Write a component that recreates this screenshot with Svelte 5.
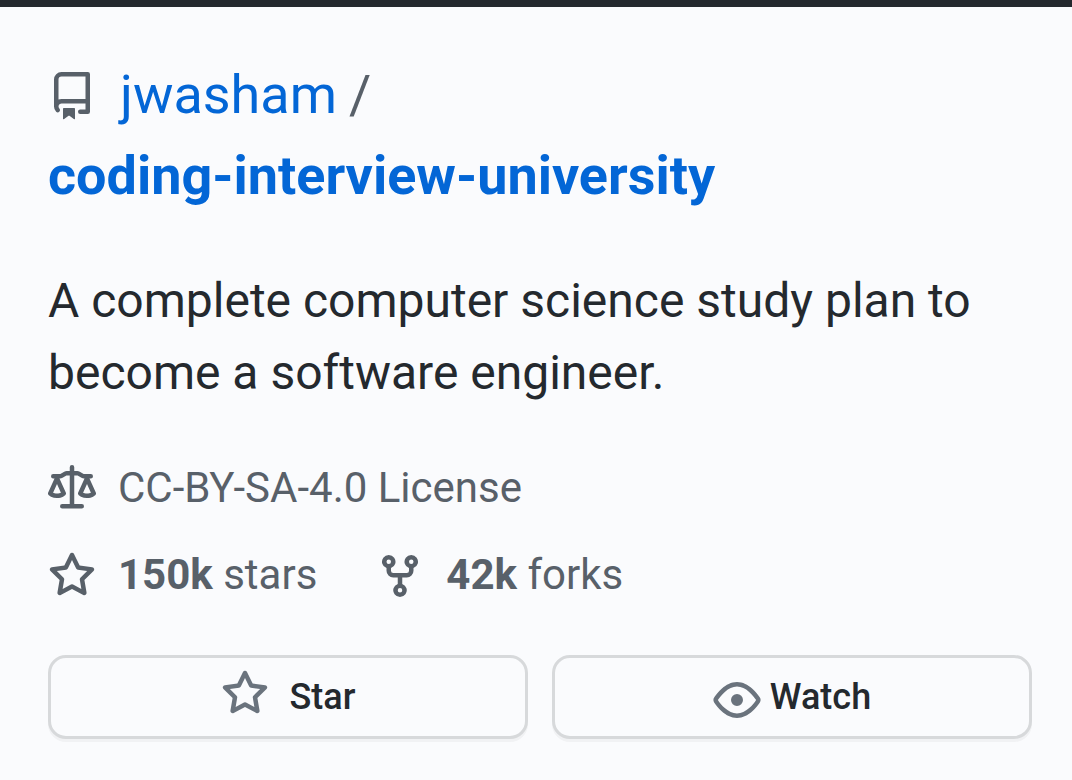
<script>
  const star = 'M8 .25a.75.75 0 01.673.418l1.882 3.815 4.21.612a.75.75 0 01.416 1.279l-3.046 2.97.719 4.192a.75.75 0 01-1.088.791L8 12.347l-3.766 1.98a.75.75 0 01-1.088-.79l.72-4.194L.818 6.374a.75.75 0 01.416-1.28l4.21-.611L7.327.668A.75.75 0 018 .25zm0 2.445L6.615 5.5a.75.75 0 01-.564.41l-3.097.45 2.24 2.184a.75.75 0 01.216.664l-.528 3.084 2.769-1.456a.75.75 0 01.698 0l2.77 1.456-.53-3.084a.75.75 0 01.216-.664l2.24-2.183-3.096-.45a.75.75 0 01-.564-.41L8 2.694z';
  const law = 'M8.75.75a.75.75 0 00-1.5 0V2h-.984c-.305 0-.604.08-.869.23l-1.288.737A.25.25 0 013.984 3H1.75a.75.75 0 000 1.5h.428L.066 9.192a.75.75 0 00.154.838l.53-.53-.53.53v.001l.002.002.002.002.006.006.016.015.045.04a3.514 3.514 0 00.686.45A4.492 4.492 0 003 11c.88 0 1.556-.22 2.023-.454a3.515 3.515 0 00.686-.45l.045-.04.016-.015.006-.006.002-.002.001-.002L5.25 9.5l.53.53a.75.75 0 00.154-.838L3.822 4.5h.162c.305 0 .604-.08.869-.23l1.289-.737a.25.25 0 01.124-.033h.984V13h-2.5a.75.75 0 000 1.5h6.5a.75.75 0 000-1.5h-2.5V3.5h.984a.25.25 0 01.124.033l1.29.736c.264.152.563.231.868.231h.162l-2.112 4.692a.75.75 0 00.154.838l.53-.53-.53.53v.001l.002.002.002.002.006.006.016.015.045.04a3.517 3.517 0 00.686.45A4.492 4.492 0 0013 11c.88 0 1.556-.22 2.023-.454a3.512 3.512 0 00.686-.45l.045-.04.01-.01.006-.005.006-.006.002-.002.001-.002-.529-.531.53.53a.75.75 0 00.154-.838L13.823 4.5h.427a.75.75 0 000-1.5h-2.234a.25.25 0 01-.124-.033l-1.29-.736A1.75 1.75 0 009.735 2H8.75V.75zM1.695 9.227c.285.135.718.273 1.305.273s1.02-.138 1.305-.273L3 6.327l-1.305 2.9zm10 0c.285.135.718.273 1.305.273s1.02-.138 1.305-.273L13 6.327l-1.305 2.9z';
  const repo = 'M2 2.5A2.5 2.5 0 014.5 0h8.75a.75.75 0 01.75.75v12.5a.75.75 0 01-.75.75h-2.5a.75.75 0 110-1.5h1.75v-2h-8a1 1 0 00-.714 1.7.75.75 0 01-1.072 1.05A2.495 2.495 0 012 11.5v-9zm10.5-1V9h-8c-.356 0-.694.074-1 .208V2.5a1 1 0 011-1h8zM5 12.25v3.25a.25.25 0 00.4.2l1.45-1.087a.25.25 0 01.3 0L8.6 15.7a.25.25 0 00.4-.2v-3.25a.25.25 0 00-.25-.25h-3.5a.25.25 0 00-.25.25z';
  const fork = 'M5 3.25a.75.75 0 11-1.5 0 .75.75 0 011.5 0zm0 2.122a2.25 2.25 0 10-1.5 0v.878A2.25 2.25 0 005.75 8.5h1.5v2.128a2.251 2.251 0 101.5 0V8.5h1.5a2.25 2.25 0 002.25-2.25v-.878a2.25 2.25 0 10-1.5 0v.878a.75.75 0 01-.75.75h-4.5A.75.75 0 015 6.25v-.878zm3.75 7.378a.75.75 0 11-1.5 0 .75.75 0 011.5 0zm3-8.75a.75.75 0 100-1.5.75.75 0 000 1.5z';
  const eye = 'M1.679 7.932c.412-.621 1.242-1.75 2.366-2.717C5.175 4.242 6.527 3.5 8 3.5c1.473 0 2.824.742 3.955 1.715 1.124.967 1.954 2.096 2.366 2.717a.119.119 0 010 .136c-.412.621-1.242 1.75-2.366 2.717C10.825 11.758 9.473 12.5 8 12.5c-1.473 0-2.824-.742-3.955-1.715C2.92 9.818 2.09 8.69 1.679 8.068a.119.119 0 010-.136zM8 2c-1.981 0-3.67.992-4.933 2.078C1.797 5.169.88 6.423.43 7.1a1.619 1.619 0 000 1.798c.45.678 1.367 1.932 2.637 3.024C4.329 13.008 6.019 14 8 14c1.981 0 3.67-.992 4.933-2.078 1.27-1.091 2.187-2.345 2.637-3.023a1.619 1.619 0 000-1.798c-.45-.678-1.367-1.932-2.637-3.023C11.671 2.992 9.981 2 8 2zm0 8a2 2 0 100-4 2 2 0 000 4z';
</script>

{#snippet icon(d)}
  <svg viewBox="0 0 16 16" width="48" height="48" aria-hidden="true"><path fill-rule="evenodd" {d} /></svg>
{/snippet}

<main>
  <h1>
    <span class="owner">{@render icon(repo)}<a href="#owner">jwasham</a><span class="slash">/</span></span>
    <a class="name" href="#repo">coding-interview-university</a>
  </h1>
  <p>A complete computer science study plan to become a software engineer.</p>
  <div class="meta license">{@render icon(law)}<span>CC-BY-SA-4.0 License</span></div>
  <div class="meta counts">
    <div class="meta">{@render icon(star)}<span><b>150k</b> stars</span></div>
    <div class="meta">{@render icon(fork)}<span><b>42k</b> forks</span></div>
  </div>
  <div class="actions">
    <button class="star">{@render icon(star)}<span>Star</span></button>
    <button class="watch">{@render icon(eye)}<span>Watch</span></button>
  </div>
</main>

<style>
  :global(body) { margin: 0; background: #fafbfc; }
  main {
    box-sizing: border-box;
    height: 780px;
    border-top: 7px solid #24292e;
    padding: 47px 40px 0 48px;
    font-family: Roboto, sans-serif;
    color: #24292e;
    background: #fafbfd;
    overflow: hidden;
  }
  svg { display: block; flex: none; fill: #586069; }
  h1 { margin: 0; font-size: 53.95px; line-height: 81px; font-weight: 400; }
  a { color: #0366d6; text-decoration: none; }
  .owner { display: flex; align-items: center; }
  .owner svg { margin-top: 2px; }
  .owner a { margin-left: 24px; }
  .slash { margin-left: 12px; color: #586069; }
  .name { display: block; font-weight: 700; }
  p { margin: 49px 0 0; font-size: 48px; line-height: 72px; }
  .meta { display: flex; align-items: center; font-size: 42px; line-height: 63px; color: #586069; }
  .meta span { margin: -2px 0 0 22px; }
  .license { height: 63px; margin-top: 48px; }
  .counts { height: 63px; margin-top: 24px; gap: 59px; }
  .actions { display: grid; grid-template-columns: 1fr 1fr; gap: 24px; margin-top: 48px; }
  button {
    box-sizing: border-box;
    height: 84px;
    display: flex;
    align-items: center;
    justify-content: center;
    border: 3px solid #d7d9db;
    border-radius: 18px;
    padding: 0;
    background: #fafbfd;
    box-shadow: 0 3px 0 rgba(27, 31, 35, 0.04);
    color: #24292e;
    font: 500 36px/60px Roboto, sans-serif;
  }
  button svg { fill: #6a737d; }
  .star svg { margin-bottom: 6px; }
  .watch svg { margin-top: 6px; }
  .star span { margin-left: 21px; }
  .watch span { margin-left: 9px; }
</style>
